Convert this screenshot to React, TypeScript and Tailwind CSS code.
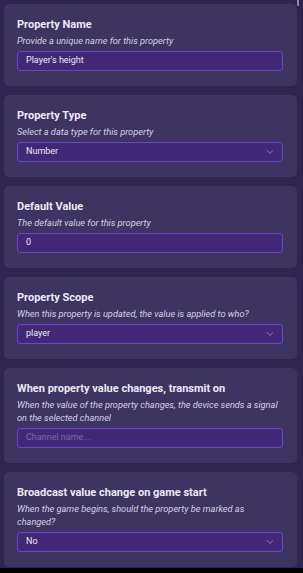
import React from "react";

function Chevron() {
  return (
    <svg width="8" height="6" viewBox="0 0 8 6" className="shrink-0">
      <path d="M1 1.2 L4 4.5 L7 1.2" fill="none" stroke="#8a7ab8" strokeWidth="1" />
    </svg>
  );
}

function Card({
  title,
  desc,
  children,
}: {
  title: string;
  desc: string;
  children: React.ReactNode;
}) {
  return (
    <div className="rounded-[5px] bg-[#3d3461] pl-[13px] pr-[14px] pt-[13px] pb-[15px]">
      <div className="text-[11px] leading-[15px] font-bold text-[#ece8f4]">{title}</div>
      <div className="mt-[2px] text-[9.2px] leading-[13px] italic text-[#d6cfe6]">{desc}</div>
      <div className="mt-[4px]">{children}</div>
    </div>
  );
}

function Field({ value, placeholder, select }: { value?: string; placeholder?: string; select?: boolean }) {
  return (
    <div className="flex h-[20px] items-center justify-between rounded-[3px] border border-[#6a47c9] bg-[#422977] pl-[8px] pr-[8px]">
      <span className={value ? "text-[9px] text-[#ece8f4]" : "text-[9px] text-[#7d68ad]"}>
        {value ?? placeholder}
      </span>
      {select && <Chevron />}
    </div>
  );
}

export default function App() {
  return (
    <div
      className="relative h-[573px] w-[303px] overflow-hidden bg-[#2e2550]"
      style={{ fontFamily: "Roboto, 'Noto Sans', sans-serif" }}
    >
      <div className="absolute right-[4px] top-0 h-[6px] w-[2px] bg-[#8a84a0]" />
      <div className="flex flex-col gap-[9px] pl-[4px] pr-[6px] pt-[4px]">
        <Card title="Property Name" desc="Provide a unique name for this property">
          <Field value="Player's height" />
        </Card>
        <Card title="Property Type" desc="Select a data type for this property">
          <Field value="Number" select />
        </Card>
        <Card title="Default Value" desc="The default value for this property">
          <Field value="0" />
        </Card>
        <Card title="Property Scope" desc="When this property is updated, the value is applied to who?">
          <Field value="player" select />
        </Card>
        <Card
          title="When property value changes, transmit on"
          desc="When the value of the property changes, the device sends a signal on the selected channel"
        >
          <Field placeholder="Channel name..." />
        </Card>
        <Card
          title="Broadcast value change on game start"
          desc="When the game begins, should the property be marked as changed?"
        >
          <Field value="No" select />
        </Card>
      </div>
      <div className="absolute bottom-0 left-0 h-[5px] w-full bg-black" />
    </div>
  );
}
